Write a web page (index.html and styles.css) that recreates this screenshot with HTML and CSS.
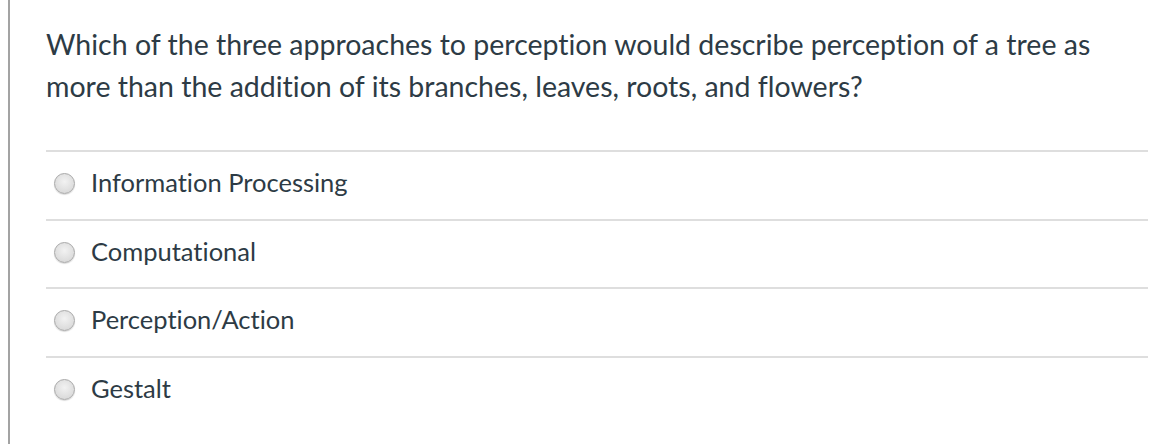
FILE: index.html
```html
<!DOCTYPE html>
<html>
<head>
<meta charset="utf-8">
<link rel="stylesheet" href="styles.css">
</head>
<body>
<div class="panel">
  <div class="question">Which of the three approaches to perception would describe perception of a tree as more than the addition of its branches, leaves, roots, and flowers?</div>
  <div class="answers">
    <label class="answer"><span class="radio"></span><span class="text">Information Processing</span></label>
    <label class="answer"><span class="radio"></span><span class="text">Computational</span></label>
    <label class="answer"><span class="radio"></span><span class="text">Perception/Action</span></label>
    <label class="answer"><span class="radio"></span><span class="text">Gestalt</span></label>
  </div>
</div>
</body>
</html>
```
FILE: styles.css
```css
html, body { background: #fff; }
body {
  margin: 0 0 0 8px;
  font-family: Lato, "Liberation Sans", sans-serif;
  color: #2d3b45;
  font-variant-ligatures: none;
}
.panel {
  border-left: 2px solid #a3a3a3;
  height: 444px;
  box-sizing: border-box;
  padding: 23px 18px 0 36px;
}
.question {
  font-size: 28.5px;
  line-height: 42px;
  max-width: 1090px;
  margin-bottom: 43px;
}
.answers { display: flex; flex-direction: column; }
.answer {
  display: flex;
  align-items: center;
  box-sizing: border-box;
  height: 68.6px;
  border-top: 2px solid #dedede;
  padding: 0 0 6px 8px;
}
.radio {
  width: 19px;
  height: 19px;
  border-radius: 50%;
  border: 1px solid #a8a8a8;
  background: radial-gradient(circle at 50% 40%, #f2f2f2 0%, #dcdcdc 70%, #cfcfcf 100%);
  box-shadow: 0 1px 1px rgba(0,0,0,0.15);
  margin: 3px 16px 0 0;
  flex: none;
}
.text { font-size: 25.5px; }
```
